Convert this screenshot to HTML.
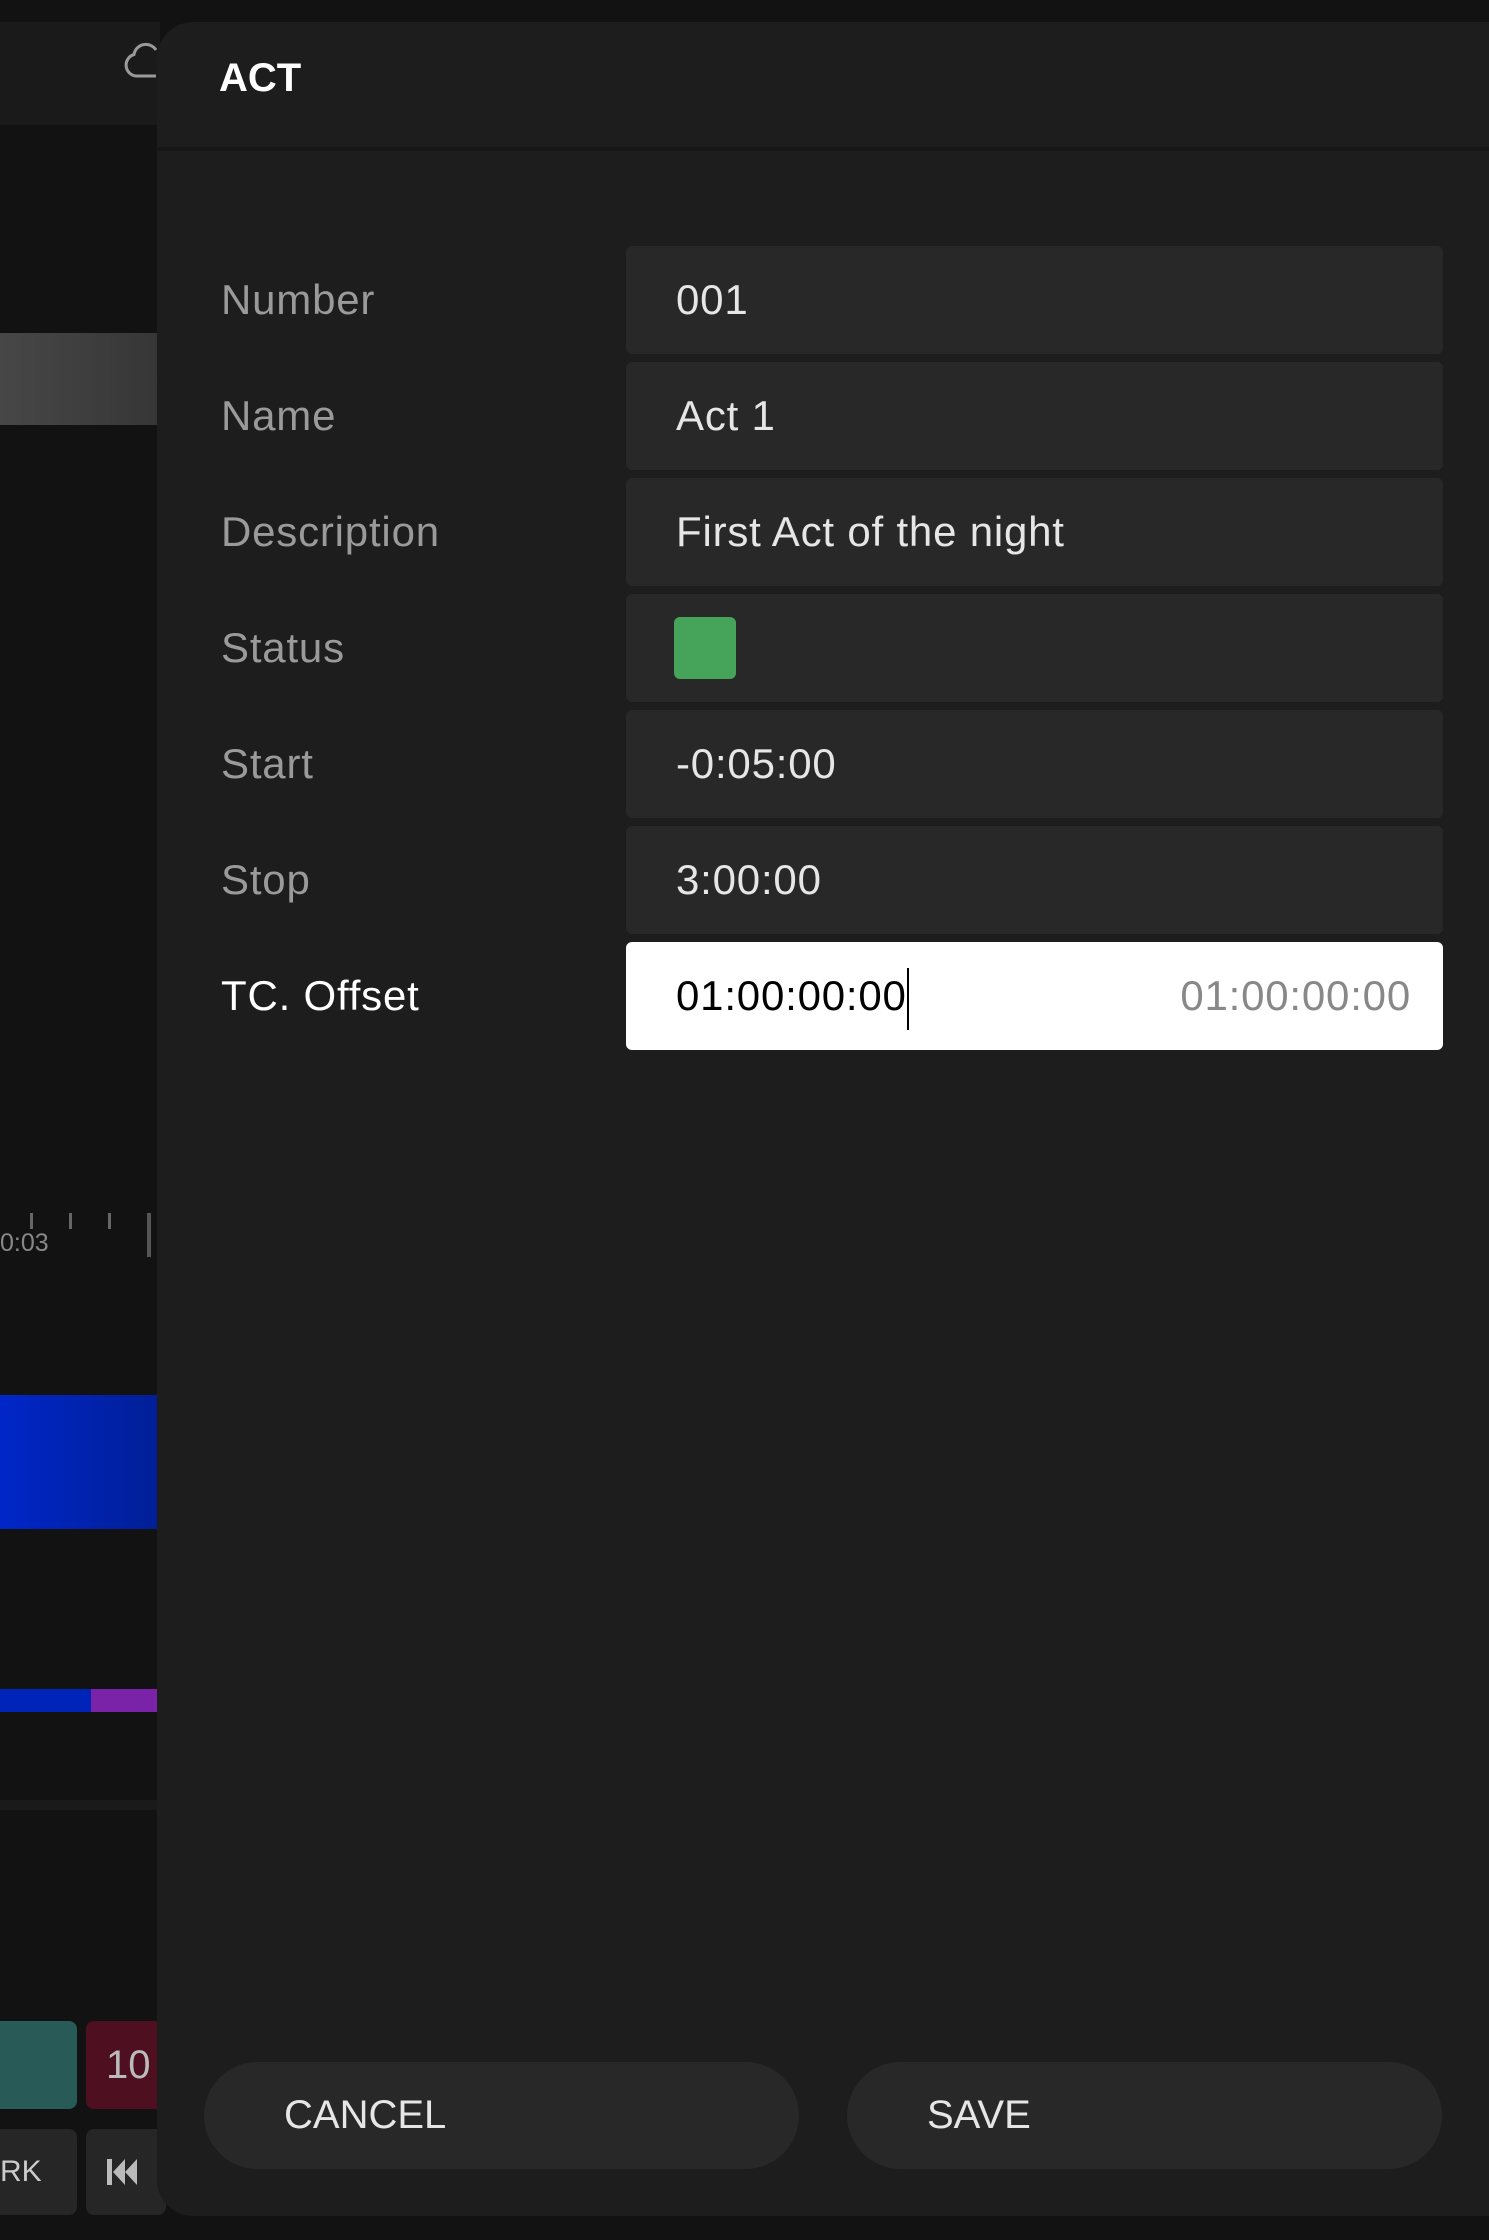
<!DOCTYPE html>
<html><head><meta charset="utf-8"><style>
*{margin:0;padding:0;box-sizing:border-box}
body{width:1489px;height:2240px;background:#121212;position:relative;overflow:hidden;font-family:"Liberation Sans",sans-serif}
.a{position:absolute}
.lbl{position:absolute;left:221px;color:#9a9a9a;font-size:42px;letter-spacing:0.8px;line-height:108px}
.inp{position:absolute;left:626px;width:817px;height:108px;background:#282828;border-radius:6px;color:#e6e6e6;font-size:42px;letter-spacing:0.8px;line-height:108px;padding-left:50px}
.btn{position:absolute;top:2062px;height:107px;width:595px;background:#282828;border-radius:54px;color:#e6e6e6;font-size:40px;line-height:107px;padding-left:80px}
</style></head><body>
<div class="a" style="left:0;top:22px;width:160px;height:103px;background:#1a1a1a"></div>
<svg class="a" style="left:122px;top:38px" width="40" height="42" viewBox="0 0 40 42"><path d="M34 38H14a11 11 0 0 1-2-21.5A12 12 0 0 1 34 12" fill="none" stroke="#9a9a9a" stroke-width="3"/></svg>
<div class="a" style="left:0;top:333px;width:160px;height:92px;background:linear-gradient(90deg,#474747,#363636)"></div>
<div class="a" style="left:30px;top:1213px;width:3px;height:16px;background:#666"></div>
<div class="a" style="left:69px;top:1213px;width:3px;height:16px;background:#666"></div>
<div class="a" style="left:108px;top:1213px;width:3px;height:16px;background:#666"></div>
<div class="a" style="left:147px;top:1213px;width:4px;height:44px;background:#555"></div>
<div class="a" style="left:0;top:1229px;color:#888;font-size:25px">0:03</div>
<div class="a" style="left:0;top:1395px;width:160px;height:134px;background:linear-gradient(90deg,#0026c8,#001f96)"></div>
<div class="a" style="left:0;top:1689px;width:91px;height:23px;background:#0024b8"></div>
<div class="a" style="left:91px;top:1689px;width:69px;height:23px;background:#7a22a8"></div>
<div class="a" style="left:0;top:1800px;width:160px;height:10px;background:#1a1a1a"></div>
<div class="a" style="left:0;top:2021px;width:77px;height:88px;background:#285a58;border-radius:0 8px 8px 0"></div>
<div class="a" style="left:86px;top:2021px;width:80px;height:88px;background:#4e1020;border-radius:8px;color:#bbb;font-size:40px;line-height:88px;padding-left:20px">10</div>
<div class="a" style="left:0;top:2129px;width:77px;height:86px;background:#262626;border-radius:0 8px 8px 0;color:#ccc;font-size:30px;line-height:86px">RK</div>
<div class="a" style="left:86px;top:2129px;width:80px;height:86px;background:#262626;border-radius:8px"><svg class="a" style="left:21px;top:28px" width="32" height="30" viewBox="0 0 32 30"><rect x="0" y="2" width="5" height="26" fill="#bbb"/><path d="M18 2L6 15l12 13z M30 2L18 15l12 13z" fill="#bbb"/></svg></div>
<div class="a" style="left:157px;top:22px;width:1340px;height:2194px;background:#1d1d1d;border-radius:36px 0 0 36px"></div>
<div class="a" style="left:157px;top:147px;width:1340px;height:4px;background:#161616"></div>
<div class="a" style="left:219px;top:48px;color:#fff;font-size:40px;font-weight:bold;line-height:60px">ACT</div>
<div class="lbl" style="top:246px">Number</div><div class="inp" style="top:246px">001</div>
<div class="lbl" style="top:362px">Name</div><div class="inp" style="top:362px">Act 1</div>
<div class="lbl" style="top:478px">Description</div><div class="inp" style="top:478px">First Act of the night</div>
<div class="lbl" style="top:594px">Status</div><div class="inp" style="top:594px"><div class="a" style="left:48px;top:23px;width:62px;height:62px;background:#46a45a;border-radius:6px"></div></div>
<div class="lbl" style="top:710px">Start</div><div class="inp" style="top:710px">-0:05:00</div>
<div class="lbl" style="top:826px">Stop</div><div class="inp" style="top:826px">3:00:00</div>
<div class="lbl" style="top:942px;color:#fff">TC. Offset</div>
<div class="inp" style="top:942px;background:#fff;color:#000">01:00:00:00<span style="display:inline-block;width:2px;height:62px;background:#000;vertical-align:middle"></span><span style="position:absolute;right:32px;color:#888">01:00:00:00</span></div>
<div class="btn" style="left:204px">CANCEL</div>
<div class="btn" style="left:847px">SAVE</div>
</body></html>
